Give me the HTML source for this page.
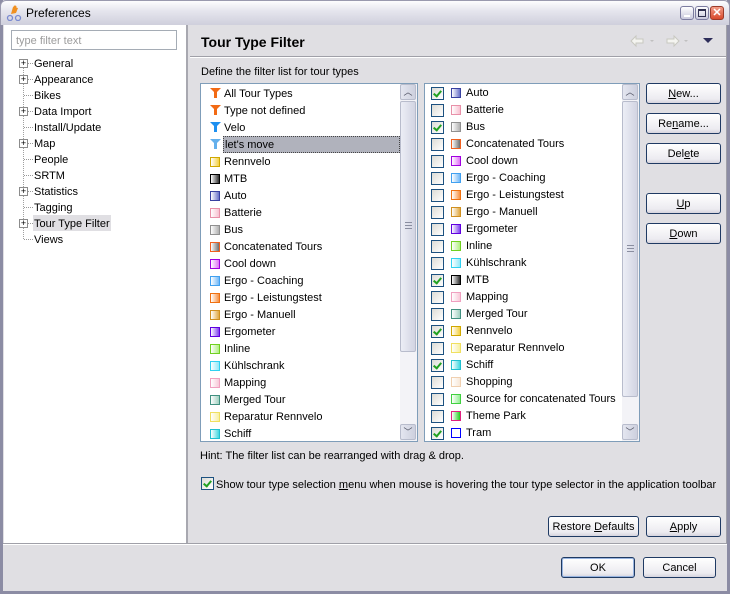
<!DOCTYPE html>
<html><head><meta charset="utf-8"><style>
*{box-sizing:border-box;margin:0;padding:0}
body{width:730px;height:594px;overflow:hidden;background:#e0dfe3;font-family:"Liberation Sans",sans-serif;font-size:11px;color:#000;position:relative}
.a{position:absolute}
.frame{left:0;top:0;width:730px;height:594px;border:3px solid #8c8ca4;border-top:none;background:#e0dfe3}
.title{left:0;top:0;width:730px;height:25px;background:linear-gradient(#fdfdfe,#e6e6ee 40%,#cfcfdc);border:1px solid #9a9aae;border-bottom:none;border-radius:6px 6px 0 0}
.tb{width:14px;height:14px;top:6px;border:1px solid #7c7ca0;border-radius:3px;background:linear-gradient(#fff,#c8c8dc)}
.left{left:4px;top:25px;width:184px;height:519px;background:#fff;border-right:2px solid #a8a8b0}
.tree{left:34px;height:16px;line-height:18px;font-size:11px}
.exp{left:19px;width:9px;height:9px;border:1px solid #8c8c8c;background:#fff;font-size:9px;line-height:7px;text-align:center;color:#000}
.dot{border-top:1px dotted #999}
.list{background:#fff;border:1px solid #7f9db9;overflow:hidden}
.row{position:absolute;height:17px;line-height:19px;white-space:nowrap}
.sw{position:absolute;width:10px;height:10px;top:4px;border:1px solid}
.cb{position:absolute;width:13px;height:13px;top:2px;border:1px solid #1c5180;background:linear-gradient(135deg,#dcdcd6,#fff)}
.cb.c::after{content:"";position:absolute;left:3px;top:1px;width:3px;height:6px;border:solid #21a121;border-width:0 2px 2px 0;transform:rotate(40deg)}
.sb{position:absolute;width:17px;background:#f3f3f7}
.sbb{position:absolute;left:0;width:16px;height:16px;border:1px solid #b8bccc;border-radius:2px;background:linear-gradient(90deg,#e4e6f0,#cdd0de);font-size:9px;text-align:center;line-height:14px;color:#4d5060}
.th{position:absolute;left:0;width:16px;border:1px solid #b8bccc;border-radius:2px;background:linear-gradient(90deg,#eceef6,#d2d4e2)}
.btn{position:absolute;height:21px;border:1px solid #1f3a63;border-radius:3px;background:linear-gradient(#fff,#ecebf0 80%,#d6d4de);text-align:center;line-height:20px}
u{text-decoration:underline}
</style></head><body>
<div class="a frame"></div>
<div class="a title"></div>
<svg class="a" style="left:6px;top:5px" width="16" height="16"><circle cx="4" cy="13" r="2.5" fill="none" stroke="#7a8ad0" stroke-width="1.3"/><circle cx="12" cy="13" r="2.5" fill="none" stroke="#7a8ad0" stroke-width="1.3"/><path d="M7 2 L12 3 L10 8 L5 9 Z" fill="#f09020"/><circle cx="9" cy="2" r="1.5" fill="#f09020"/></svg>
<div class="a" style="left:26px;top:6px;font-size:12px;color:#000">Preferences</div>
<div class="a tb" style="left:680px"><div class="a" style="left:3px;top:8px;width:6px;height:2px;background:#fff"></div></div>
<div class="a tb" style="left:695px"><div class="a" style="left:2px;top:2px;width:8px;height:8px;border:1px solid #303050;border-top-width:2px"></div></div>
<div class="a tb" style="left:710px;background:linear-gradient(#f29c88,#d84a2c);border-color:#9a3a2a;color:#fff;font-weight:bold;font-size:11px;line-height:12px;text-align:center">✕</div>

<div class="a left"></div>
<div class="a" style="left:11px;top:30px;width:166px;height:20px;border:1px solid #a5acb5;background:#fff;color:#9c9c9c;padding:3px 4px;line-height:14px">type filter text</div>
<div class="a" style="left:23px;top:63px;width:1px;height:176px;border-left:1px dotted #a0a0a0"></div>
<div class="a exp" style="top:59px">+</div><div class="a dot" style="left:28px;top:63px;width:5px"></div><div class="a tree" style="top:55px">General</div>
<div class="a exp" style="top:75px">+</div><div class="a dot" style="left:28px;top:79px;width:5px"></div><div class="a tree" style="top:71px">Appearance</div>
<div class="a dot" style="left:24px;top:95px;width:9px"></div><div class="a tree" style="top:87px">Bikes</div>
<div class="a exp" style="top:107px">+</div><div class="a dot" style="left:28px;top:111px;width:5px"></div><div class="a tree" style="top:103px">Data Import</div>
<div class="a dot" style="left:24px;top:127px;width:9px"></div><div class="a tree" style="top:119px">Install/Update</div>
<div class="a exp" style="top:139px">+</div><div class="a dot" style="left:28px;top:143px;width:5px"></div><div class="a tree" style="top:135px">Map</div>
<div class="a dot" style="left:24px;top:159px;width:9px"></div><div class="a tree" style="top:151px">People</div>
<div class="a dot" style="left:24px;top:175px;width:9px"></div><div class="a tree" style="top:167px">SRTM</div>
<div class="a exp" style="top:187px">+</div><div class="a dot" style="left:28px;top:191px;width:5px"></div><div class="a tree" style="top:183px">Statistics</div>
<div class="a dot" style="left:24px;top:207px;width:9px"></div><div class="a tree" style="top:199px">Tagging</div>
<div class="a exp" style="top:219px">+</div><div class="a dot" style="left:28px;top:223px;width:5px"></div><div class="a tree" style="top:215px;left:33px;padding:0 1px;background:#e0dfe3">Tour Type Filter</div>
<div class="a dot" style="left:24px;top:239px;width:9px"></div><div class="a tree" style="top:231px">Views</div>

<div class="a" style="left:201px;top:34px;font-size:14px;font-weight:bold">Tour Type Filter</div>
<svg class="a" style="left:628px;top:34px" width="90" height="14"><path d="M3 7 L8 2 L8 5 L15 5 L15 9 L8 9 L8 12 Z" fill="#f4f4f0" stroke="#c8c8c0"/><path d="M22 6 L26 6 L24 8Z" fill="#c0c0c0"/><path d="M51 7 L46 2 L46 5 L39 5 L39 9 L46 9 L46 12 Z" fill="#f4f4f0" stroke="#c8c8c0"/><path d="M56 6 L60 6 L58 8Z" fill="#c0c0c0"/><path d="M75 4 L85 4 L80 9Z" fill="#2e2e5a"/></svg>
<div class="a" style="left:190px;top:56px;width:536px;height:2px;border-top:1px solid #a0a0a8;border-bottom:1px solid #fff"></div>
<div class="a" style="left:726px;top:25px;width:1px;height:519px;background:#a0a0a8"></div>
<div class="a" style="left:201px;top:66px">Define the filter list for tour types</div>

<!-- left list -->
<div class="a list" style="left:200px;top:83px;width:218px;height:359px">
<svg class="a" style="left:9px;top:4px" width="11" height="10"><path d="M0 0H11L7 4V10H4V4Z" fill="#f26a14"/></svg><div class="row" style="left:23px;top:1px">All Tour Types</div>
<svg class="a" style="left:9px;top:21px" width="11" height="10"><path d="M0 0H11L7 4V10H4V4Z" fill="#f26a14"/></svg><div class="row" style="left:23px;top:18px">Type not defined</div>
<svg class="a" style="left:9px;top:38px" width="11" height="10"><path d="M0 0H11L7 4V10H4V4Z" fill="#1e90f0"/></svg><div class="row" style="left:23px;top:35px">Velo</div>
<svg class="a" style="left:9px;top:55px" width="11" height="10"><path d="M0 0H11L7 4V10H4V4Z" fill="#64b0ec"/></svg><div class="row" style="left:22px;top:52px;width:177px;height:17px;background:#b0b2bc;border:1px dotted #444;line-height:17px;padding-left:1px">let's move</div>
<div class="sw" style="left:9px;top:73px;border-color:#d0a800;background:linear-gradient(90deg,#fff,#f4d040)"></div><div class="row" style="left:23px;top:69px">Rennvelo</div>
<div class="sw" style="left:9px;top:90px;border-color:#000;background:linear-gradient(90deg,#fff,#303030)"></div><div class="row" style="left:23px;top:86px">MTB</div>
<div class="sw" style="left:9px;top:107px;border-color:#3840a0;background:linear-gradient(90deg,#fff,#6870c8)"></div><div class="row" style="left:23px;top:103px">Auto</div>
<div class="sw" style="left:9px;top:124px;border-color:#e890a8;background:linear-gradient(90deg,#fff,#f8c0d0)"></div><div class="row" style="left:23px;top:120px">Batterie</div>
<div class="sw" style="left:9px;top:141px;border-color:#909090;background:linear-gradient(90deg,#fff,#b0b0b0)"></div><div class="row" style="left:23px;top:137px">Bus</div>
<div class="sw" style="left:9px;top:158px;border-color:#f06020;background:linear-gradient(90deg,#fff,#707070)"></div><div class="row" style="left:23px;top:154px">Concatenated Tours</div>
<div class="sw" style="left:9px;top:175px;border-color:#a000e0;background:linear-gradient(90deg,#fff,#e070f8)"></div><div class="row" style="left:23px;top:171px">Cool down</div>
<div class="sw" style="left:9px;top:192px;border-color:#40a0f0;background:linear-gradient(90deg,#fff,#70b8f8)"></div><div class="row" style="left:23px;top:188px">Ergo - Coaching</div>
<div class="sw" style="left:9px;top:209px;border-color:#f07010;background:linear-gradient(90deg,#fff,#f89040)"></div><div class="row" style="left:23px;top:205px">Ergo - Leistungstest</div>
<div class="sw" style="left:9px;top:226px;border-color:#d09020;background:linear-gradient(90deg,#fff,#e0a840)"></div><div class="row" style="left:23px;top:222px">Ergo - Manuell</div>
<div class="sw" style="left:9px;top:243px;border-color:#6000e0;background:linear-gradient(90deg,#fff,#8040f0)"></div><div class="row" style="left:23px;top:239px">Ergometer</div>
<div class="sw" style="left:9px;top:260px;border-color:#70d020;background:linear-gradient(90deg,#fff,#b0f080)"></div><div class="row" style="left:23px;top:256px">Inline</div>
<div class="sw" style="left:9px;top:277px;border-color:#30d0f0;background:linear-gradient(90deg,#fff,#90e8f8)"></div><div class="row" style="left:23px;top:273px">Kühlschrank</div>
<div class="sw" style="left:9px;top:294px;border-color:#f0a0c0;background:linear-gradient(90deg,#fff,#f8c8d8)"></div><div class="row" style="left:23px;top:290px">Mapping</div>
<div class="sw" style="left:9px;top:311px;border-color:#409080;background:linear-gradient(90deg,#fff,#a0d0c0)"></div><div class="row" style="left:23px;top:307px">Merged Tour</div>
<div class="sw" style="left:9px;top:328px;border-color:#f0e060;background:linear-gradient(90deg,#fff,#f8f0a0)"></div><div class="row" style="left:23px;top:324px">Reparatur Rennvelo</div>
<div class="sw" style="left:9px;top:345px;border-color:#20c0d0;background:linear-gradient(90deg,#fff,#40d8e0)"></div><div class="row" style="left:23px;top:341px">Schiff</div>
<div class="sb" style="left:199px;top:0;height:357px">
<div class="sbb" style="top:0">︿</div>
<div class="th" style="top:17px;height:251px"><div class="a" style="left:4px;top:120px;width:7px;height:7px;border-top:1px solid #8a8ea0;border-bottom:1px solid #8a8ea0"><div class="a" style="left:0;top:2px;width:7px;height:1px;background:#8a8ea0"></div></div></div>
<div class="sbb" style="top:340px">﹀</div></div>
</div>

<!-- right list -->
<div class="a list" style="left:424px;top:83px;width:216px;height:359px">
<div class="cb c" style="left:6px;top:3px"></div><div class="sw" style="left:26px;top:4px;border-color:#3840a0;background:linear-gradient(90deg,#fff,#6870c8)"></div><div class="row" style="left:41px;top:0">Auto</div>
<div class="cb" style="left:6px;top:20px"></div><div class="sw" style="left:26px;top:21px;border-color:#e890a8;background:linear-gradient(90deg,#fff,#f8c0d0)"></div><div class="row" style="left:41px;top:17px">Batterie</div>
<div class="cb c" style="left:6px;top:37px"></div><div class="sw" style="left:26px;top:38px;border-color:#909090;background:linear-gradient(90deg,#fff,#b0b0b0)"></div><div class="row" style="left:41px;top:34px">Bus</div>
<div class="cb" style="left:6px;top:54px"></div><div class="sw" style="left:26px;top:55px;border-color:#f06020;background:linear-gradient(90deg,#fff,#707070)"></div><div class="row" style="left:41px;top:51px">Concatenated Tours</div>
<div class="cb" style="left:6px;top:71px"></div><div class="sw" style="left:26px;top:72px;border-color:#a000e0;background:linear-gradient(90deg,#fff,#e070f8)"></div><div class="row" style="left:41px;top:68px">Cool down</div>
<div class="cb" style="left:6px;top:88px"></div><div class="sw" style="left:26px;top:89px;border-color:#40a0f0;background:linear-gradient(90deg,#fff,#70b8f8)"></div><div class="row" style="left:41px;top:85px">Ergo - Coaching</div>
<div class="cb" style="left:6px;top:105px"></div><div class="sw" style="left:26px;top:106px;border-color:#f07010;background:linear-gradient(90deg,#fff,#f89040)"></div><div class="row" style="left:41px;top:102px">Ergo - Leistungstest</div>
<div class="cb" style="left:6px;top:122px"></div><div class="sw" style="left:26px;top:123px;border-color:#d09020;background:linear-gradient(90deg,#fff,#e0a840)"></div><div class="row" style="left:41px;top:119px">Ergo - Manuell</div>
<div class="cb" style="left:6px;top:139px"></div><div class="sw" style="left:26px;top:140px;border-color:#6000e0;background:linear-gradient(90deg,#fff,#8040f0)"></div><div class="row" style="left:41px;top:136px">Ergometer</div>
<div class="cb" style="left:6px;top:156px"></div><div class="sw" style="left:26px;top:157px;border-color:#70d020;background:linear-gradient(90deg,#fff,#b0f080)"></div><div class="row" style="left:41px;top:153px">Inline</div>
<div class="cb" style="left:6px;top:173px"></div><div class="sw" style="left:26px;top:174px;border-color:#30d0f0;background:linear-gradient(90deg,#fff,#90e8f8)"></div><div class="row" style="left:41px;top:170px">Kühlschrank</div>
<div class="cb c" style="left:6px;top:190px"></div><div class="sw" style="left:26px;top:191px;border-color:#000;background:linear-gradient(90deg,#fff,#303030)"></div><div class="row" style="left:41px;top:187px">MTB</div>
<div class="cb" style="left:6px;top:207px"></div><div class="sw" style="left:26px;top:208px;border-color:#f0a0c0;background:linear-gradient(90deg,#fff,#f8c8d8)"></div><div class="row" style="left:41px;top:204px">Mapping</div>
<div class="cb" style="left:6px;top:224px"></div><div class="sw" style="left:26px;top:225px;border-color:#409080;background:linear-gradient(90deg,#fff,#a0d0c0)"></div><div class="row" style="left:41px;top:221px">Merged Tour</div>
<div class="cb c" style="left:6px;top:241px"></div><div class="sw" style="left:26px;top:242px;border-color:#d0a800;background:linear-gradient(90deg,#fff,#f4d040)"></div><div class="row" style="left:41px;top:238px">Rennvelo</div>
<div class="cb" style="left:6px;top:258px"></div><div class="sw" style="left:26px;top:259px;border-color:#f0e060;background:linear-gradient(90deg,#fff,#f8f0a0)"></div><div class="row" style="left:41px;top:255px">Reparatur Rennvelo</div>
<div class="cb c" style="left:6px;top:275px"></div><div class="sw" style="left:26px;top:276px;border-color:#20c0d0;background:linear-gradient(90deg,#fff,#40d8e0)"></div><div class="row" style="left:41px;top:272px">Schiff</div>
<div class="cb" style="left:6px;top:292px"></div><div class="sw" style="left:26px;top:293px;border-color:#f0d0b0;background:linear-gradient(90deg,#fff,#f8e8d8)"></div><div class="row" style="left:41px;top:289px">Shopping</div>
<div class="cb" style="left:6px;top:309px"></div><div class="sw" style="left:26px;top:310px;border-color:#40d040;background:linear-gradient(90deg,#fff,#90f090)"></div><div class="row" style="left:41px;top:306px">Source for concatenated Tours</div>
<div class="cb" style="left:6px;top:326px"></div><div class="sw" style="left:26px;top:327px;border-color:#e02080;background:linear-gradient(90deg,#fff,#20d020)"></div><div class="row" style="left:41px;top:323px">Theme Park</div>
<div class="cb c" style="left:6px;top:343px"></div><div class="sw" style="left:26px;top:344px;border-color:#0000ff;background:#fff"></div><div class="row" style="left:41px;top:340px">Tram</div>
<div class="sb" style="left:197px;top:0;height:357px">
<div class="sbb" style="top:0">︿</div>
<div class="th" style="top:17px;height:296px"><div class="a" style="left:4px;top:143px;width:7px;height:7px;border-top:1px solid #8a8ea0;border-bottom:1px solid #8a8ea0"><div class="a" style="left:0;top:2px;width:7px;height:1px;background:#8a8ea0"></div></div></div>
<div class="sbb" style="top:340px">﹀</div></div>
</div>

<div class="btn" style="left:646px;top:83px;width:75px"><u>N</u>ew...</div>
<div class="btn" style="left:646px;top:113px;width:75px">Re<u>n</u>ame...</div>
<div class="btn" style="left:646px;top:143px;width:75px">Del<u>e</u>te</div>
<div class="btn" style="left:646px;top:193px;width:75px"><u>U</u>p</div>
<div class="btn" style="left:646px;top:223px;width:75px"><u>D</u>own</div>

<div class="a" style="left:200px;top:450px">Hint: The filter list can be rearranged with drag &amp; drop.</div>
<div class="cb c" style="left:201px;top:477px"></div>
<div class="a" style="left:216px;top:479px;white-space:nowrap">Show tour type selection <u>m</u>enu when mouse is hovering the tour type selector in the application toolbar</div>

<div class="btn" style="left:548px;top:516px;width:91px">Restore <u>D</u>efaults</div>
<div class="btn" style="left:646px;top:516px;width:75px"><u>A</u>pply</div>

<div class="a" style="left:3px;top:543px;width:724px;height:2px;border-top:1px solid #a0a0a8;border-bottom:1px solid #fff"></div>
<div class="btn" style="left:561px;top:557px;width:74px;border-color:#1f3a63;box-shadow:inset 0 0 0 1px #98b4e0">OK</div>
<div class="btn" style="left:643px;top:557px;width:73px">Cancel</div>
</body></html>
